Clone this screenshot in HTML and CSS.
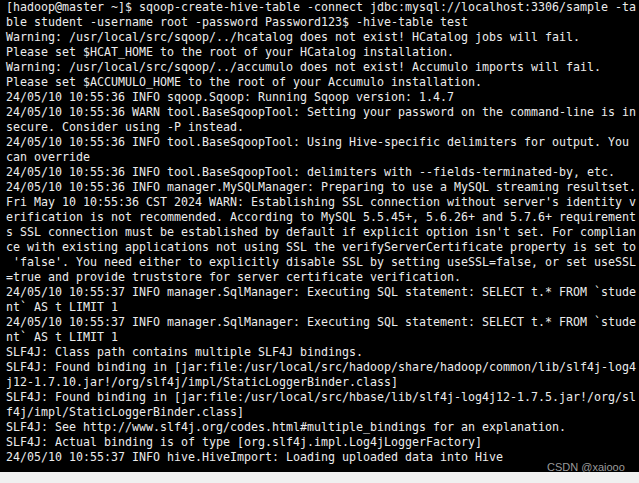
FILE: index.html
```html
<!DOCTYPE html>
<html>
<head>
<meta charset="utf-8">
<link rel="stylesheet" href="styles.css">
</head>
<body>
<div class="page">
<div class="terminal">
<pre class="output">[hadoop@master ~]$ sqoop-create-hive-table -connect jdbc:mysql://localhost:3306/sample -ta
ble student -username root -password Password123$ -hive-table test
Warning: /usr/local/src/sqoop/../hcatalog does not exist! HCatalog jobs will fail.
Please set $HCAT_HOME to the root of your HCatalog installation.
Warning: /usr/local/src/sqoop/../accumulo does not exist! Accumulo imports will fail.
Please set $ACCUMULO_HOME to the root of your Accumulo installation.
24/05/10 10:55:36 INFO sqoop.Sqoop: Running Sqoop version: 1.4.7
24/05/10 10:55:36 WARN tool.BaseSqoopTool: Setting your password on the command-line is in
secure. Consider using -P instead.
24/05/10 10:55:36 INFO tool.BaseSqoopTool: Using Hive-specific delimiters for output. You
can override
24/05/10 10:55:36 INFO tool.BaseSqoopTool: delimiters with --fields-terminated-by, etc.
24/05/10 10:55:36 INFO manager.MySQLManager: Preparing to use a MySQL streaming resultset.
Fri May 10 10:55:36 CST 2024 WARN: Establishing SSL connection without server's identity v
erification is not recommended. According to MySQL 5.5.45+, 5.6.26+ and 5.7.6+ requirement
s SSL connection must be established by default if explicit option isn't set. For complian
ce with existing applications not using SSL the verifyServerCertificate property is set to
 'false'. You need either to explicitly disable SSL by setting useSSL=false, or set useSSL
=true and provide truststore for server certificate verification.
24/05/10 10:55:37 INFO manager.SqlManager: Executing SQL statement: SELECT t.* FROM `stude
nt` AS t LIMIT 1
24/05/10 10:55:37 INFO manager.SqlManager: Executing SQL statement: SELECT t.* FROM `stude
nt` AS t LIMIT 1
SLF4J: Class path contains multiple SLF4J bindings.
SLF4J: Found binding in [jar:file:/usr/local/src/hadoop/share/hadoop/common/lib/slf4j-log4
j12-1.7.10.jar!/org/slf4j/impl/StaticLoggerBinder.class]
SLF4J: Found binding in [jar:file:/usr/local/src/hbase/lib/slf4j-log4j12-1.7.5.jar!/org/sl
f4j/impl/StaticLoggerBinder.class]
SLF4J: See http://www.slf4j.org/codes.html#multiple_bindings for an explanation.
SLF4J: Actual binding is of type [org.slf4j.impl.Log4jLoggerFactory]
24/05/10 10:55:37 INFO hive.HiveImport: Loading uploaded data into Hive</pre>
<span class="watermark">CSDN @xaiooo</span>
</div>
<div class="footer"></div>
</div>
</body>
</html>
```

FILE: styles.css
```css
html, body {
  margin: 0;
  padding: 0;
  background: #f0f0f0;
}
.page {
  width: 639px;
  height: 483px;
  display: flex;
  flex-direction: column;
}
.terminal {
  position: relative;
  height: 472px;
  background: #000;
  overflow: hidden;
}
.output {
  display: inline-block;
  margin: 0;
  padding: 0 0 0 6px;
  font-family: "DejaVu Sans Mono", monospace;
  font-size: 11.63px;
  line-height: 15px;
  color: #ececec;
  white-space: pre;
}
.footer {
  flex: 1;
  background: #f0f0f0;
}
.watermark {
  position: absolute;
  left: 547px;
  top: 461px;
  font-family: "Liberation Sans", Arial, sans-serif;
  font-size: 11px;
  line-height: 12px;
  color: #9a9a9a;
}
```
